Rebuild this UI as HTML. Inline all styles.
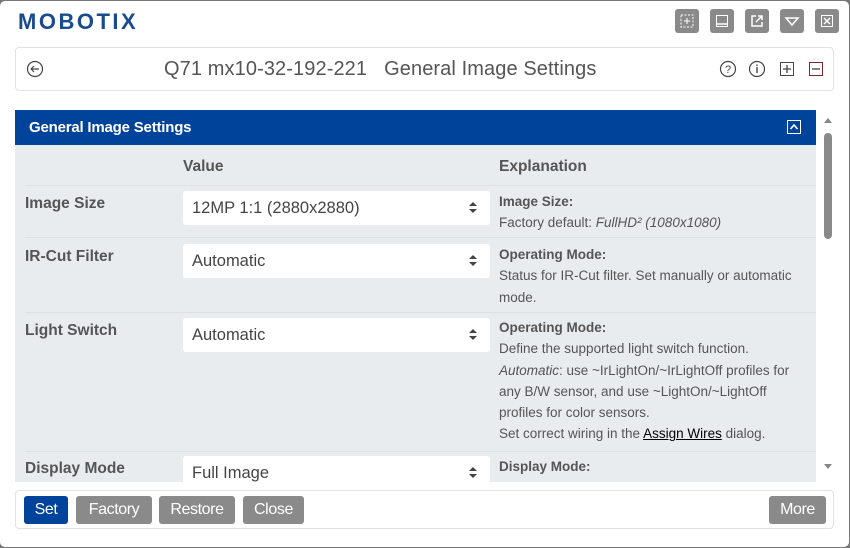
<!DOCTYPE html>
<html><head><meta charset="utf-8"><style>
*{box-sizing:border-box;margin:0;padding:0}
body{width:850px;height:548px;background:#777;font-family:"Liberation Sans",sans-serif;color:#555;position:relative;overflow:hidden}
.win{position:absolute;left:0;top:1px;width:849px;height:546px;background:#fff;border-radius:5px}
.logo{position:absolute;left:18px;top:8px;font-size:22px;font-weight:bold;color:#1a4b8f;letter-spacing:2.5px}
.tb{position:absolute;top:8px;width:24px;height:24px;background:#8a8a8a;border-radius:3px}
.tb svg{position:absolute;left:0;top:0}
.head{position:absolute;left:15px;top:47px;width:819px;height:44px;border:1px solid #e2e2e2;border-radius:4px}
.title{position:absolute;left:164px;top:58px;font-size:20px;color:#555;letter-spacing:0.1px;white-space:nowrap}
.panel{position:absolute;left:15px;top:109px;width:801px;height:372px;background:#e9ecef;overflow:hidden}
.ph{height:35px;background:#00439a;color:#fff;font-weight:bold;font-size:15px;padding:9px 0 0 14px;letter-spacing:-0.2px;position:relative}
.t{position:absolute;font-size:13.5px;letter-spacing:0;white-space:nowrap;line-height:21.3px}
.lab{position:absolute;left:10px;font-weight:bold;font-size:15.5px;color:#555;letter-spacing:0}
.sel{position:absolute;left:168px;width:307px;height:34px;background:#fff;border-radius:3px;font-size:16.5px;padding:8px 0 0 9px;color:#444;letter-spacing:0}
.sel:after{content:"";position:absolute;right:13px;top:11px;border:4px solid transparent;border-bottom:4px solid #444;border-top:none}
.sel:before{content:"";position:absolute;right:13px;top:18px;border:4px solid transparent;border-top:4px solid #444;border-bottom:none}
.hr{position:absolute;left:10px;right:0;height:1px;background:#dde0e3}
.bar{position:absolute;left:15px;top:489px;width:819px;height:39px;border:1px solid #e2e2e2;border-radius:4px}
.b{position:absolute;top:495px;height:28px;background:#8a8a8a;color:#fff;border-radius:3px;font-size:16px;text-align:center;padding-top:5px;letter-spacing:-0.4px}
</style></head><body><div class="win">
<div class="logo">MOBOTIX</div>
<div class="tb" style="left:675px"><svg width="24" height="24"><rect x="6" y="6" width="12" height="12" fill="none" stroke="#fff" stroke-dasharray="2 1.5"/><path d="M12 9v6M9 12h6" stroke="#fff"/></svg></div>
<div class="tb" style="left:710px"><svg width="24" height="24"><rect x="6.5" y="6.5" width="11" height="11" fill="none" stroke="#fff"/><path d="M7 15h10" stroke="#fff" stroke-width="1.5"/></svg></div>
<div class="tb" style="left:745px"><svg width="24" height="24"><path d="M11 7H7v10h10v-4" fill="none" stroke="#fff" stroke-width="1.5"/><path d="M11 13l6-6M13 7h4v4" fill="none" stroke="#fff" stroke-width="1.5"/></svg></div>
<div class="tb" style="left:780px"><svg width="24" height="24"><path d="M6 9h12l-6 7z" fill="none" stroke="#fff" stroke-width="1.5"/></svg></div>
<div class="tb" style="left:815px"><svg width="24" height="24"><rect x="6.5" y="6.5" width="11" height="11" fill="none" stroke="#fff"/><path d="M9 9l6 6M15 9l-6 6" stroke="#fff" stroke-width="1.5"/></svg></div>
<div class="head" style="top:46px"></div>
<svg style="position:absolute;left:25px;top:59px" width="20" height="20"><circle cx="10" cy="9" r="7.5" fill="none" stroke="#444" stroke-width="1.2"/><path d="M6 9h8M6 9l3-3M6 9l3 3" fill="none" stroke="#444" stroke-width="1.2"/></svg>
<div class="title" style="top:57px">Q71 mx10-32-192-221&nbsp;&nbsp;&nbsp;General Image Settings</div>
<svg style="position:absolute;left:718px;top:59px" width="110" height="20"><circle cx="10" cy="9" r="7.5" fill="none" stroke="#444" stroke-width="1.2"/><text x="10" y="13" font-size="11" text-anchor="middle" fill="#444" font-family="Liberation Sans">?</text><circle cx="39" cy="9" r="7.5" fill="none" stroke="#444" stroke-width="1.2"/><path d="M39 7v6M39 4.5v1.5" stroke="#444" stroke-width="1.4"/><rect x="62.5" y="2.5" width="13" height="13" fill="none" stroke="#444"/><path d="M69 5v8M65 9h8" stroke="#444" stroke-width="1.3"/><rect x="91.5" y="2.5" width="13" height="13" fill="none" stroke="#7a2a2a"/><path d="M94 9h8" stroke="#444" stroke-width="1.3"/></svg>
<div class="panel">
<div class="ph">General Image Settings<svg style="position:absolute;left:772px;top:10px" width="14" height="14"><rect x="0.5" y="0.5" width="13" height="13" fill="none" stroke="#fff"/><path d="M3.5 9l3.5-4 3.5 4" fill="none" stroke="#fff" stroke-width="1.6"/></svg></div>
<div class="lab" style="left:168px;top:48px">Value</div>
<div class="lab" style="left:484px;top:48px">Explanation</div>
<div class="hr" style="top:75px"></div>
<div class="lab" style="top:85px">Image Size</div>
<div class="sel" style="top:81px">12MP 1:1 (2880x2880)</div>
<div class="t" style="left:484px;top:81px"><b>Image Size:</b><br>Factory default: <i>FullHD² (1080x1080)</i></div>
<div class="hr" style="top:127px"></div>
<div class="lab" style="top:138px">IR-Cut Filter</div>
<div class="sel" style="top:134px">Automatic</div>
<div class="t" style="left:484px;top:134px"><b>Operating Mode:</b><br>Status for IR-Cut filter. Set manually or automatic<br>mode.</div>
<div class="hr" style="top:202px"></div>
<div class="lab" style="top:212px">Light Switch</div>
<div class="sel" style="top:208px">Automatic</div>
<div class="t" style="left:484px;top:207px"><b>Operating Mode:</b><br>Define the supported light switch function.<br><i>Automatic</i>: use ~IrLightOn/~IrLightOff profiles for<br>any B/W sensor, and use ~LightOn/~LightOff<br>profiles for color sensors.<br>Set correct wiring in the <u style="color:#000">Assign Wires</u> dialog.</div>
<div class="hr" style="top:341px"></div>
<div class="lab" style="top:350px">Display Mode</div>
<div class="sel" style="top:346px">Full Image</div>
<div class="t" style="left:484px;top:346px"><b>Display Mode:</b><br>Define whether the full area of the selected</div>
</div>
<svg style="position:absolute;left:821px;top:112px" width="14" height="360"><path d="M3 10l4-5 4 5z" fill="#888"/><rect x="3" y="20" width="8" height="106" rx="4" fill="#8a8a8a"/><path d="M3 351l4 5 4-5z" fill="#888"/></svg>
<div class="bar"></div>
<div class="b" style="left:24px;width:44px;background:#00439a">Set</div>
<div class="b" style="left:76px;width:76px">Factory</div>
<div class="b" style="left:159px;width:76px">Restore</div>
<div class="b" style="left:243px;width:61px">Close</div>
<div class="b" style="left:769px;width:57px">More</div>
</div></body></html>
